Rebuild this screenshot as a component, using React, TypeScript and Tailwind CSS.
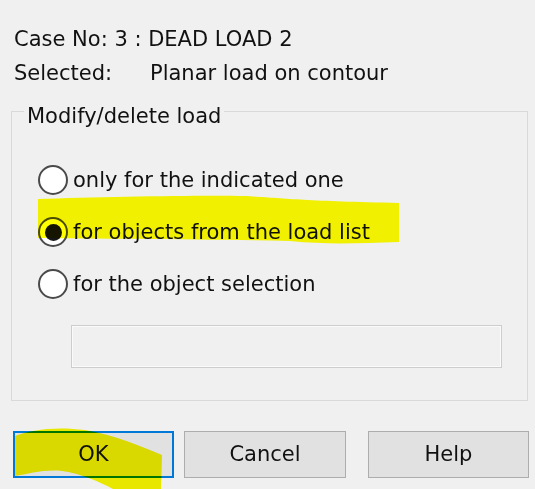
import { useState } from 'react';

const options = ['only for the indicated one', 'for objects from the load list', 'for the object selection'];

function Radio({ checked }: { checked: boolean }) {
  return (
    <span className="flex items-center justify-center w-[30px] h-[30px] rounded-full border-2 border-[#4a4a4a] bg-white shrink-0">
      {checked && <span className="w-[17px] h-[17px] rounded-full bg-[#161616]" />}
    </span>
  );
}

function DialogButton({ label, focused, className }: { label: string; focused?: boolean; className?: string }) {
  return (
    <button
      className={
        'h-[47px] bg-[#e1e1e1] leading-none ' +
        (focused ? 'border-2 border-[#0078d7] ' : 'border border-[#adadad] ') +
        (className ?? '')
      }>
      {label}
    </button>
  );
}

export default function App() {
  const [selected, setSelected] = useState(1);

  return (
    <div className="relative w-[535px] h-[489px] overflow-hidden bg-[#f0f0f0] text-[21px] text-[#111111] font-['DejaVu_Sans',sans-serif]">
      <div className="pt-[22px] pl-[14px] leading-[34px]">
        <div>Case No: 3 : DEAD LOAD 2</div>
        <div className="flex">
          <span className="w-[136px]">Selected:</span>
          <span>Planar load on contour</span>
        </div>
      </div>

      <fieldset className="mt-[4px] ml-[11px] w-[517px] border border-[#d9d9d9]">
        <legend className="ml-[12px] px-[3px] pt-[10px] leading-[24px]">Modify/delete load</legend>
        <div className="pt-[26px] pl-[26px] pb-[32px]">
          {options.map((opt, i) => (
            <label key={opt} className="flex items-center h-[52px] leading-[24px]" onClick={() => setSelected(i)}>
              <Radio checked={selected === i} />
              <span className="ml-[5px]">{opt}</span>
            </label>
          ))}
          <div className="mt-[15px] ml-[33px] w-[431px] h-[43px] border border-[#cdcdcd] shadow-[inset_0_0_0_1px_#fafafa]" />
        </div>
      </fieldset>

      <div className="flex mt-[30px] pl-[13px]">
        <DialogButton label="OK" focused className="w-[161px]" />
        <DialogButton label="Cancel" className="ml-[10px] w-[162px]" />
        <DialogButton label="Help" className="ml-[22px] w-[161px]" />
      </div>

      {/* highlighter marks */}
      <svg className="absolute inset-0 pointer-events-none mix-blend-multiply" width="535" height="489">
        <path
          d="M38,199 C100,197 200,195 245,196 C280,198 300,201 399,203 L399,242 C360,243 330,245 290,241 C200,239 100,239 38,238 Z"
          fill="#ffff00"
        />
        <path
          d="M15,436 C30,430 55,426 85,430 C115,435 140,446 162,455 L161,489 L113,489 C100,482 82,474 62,471 C45,469 28,474 15,476 Z"
          fill="#f6f600"
        />
      </svg>
    </div>
  );
}
